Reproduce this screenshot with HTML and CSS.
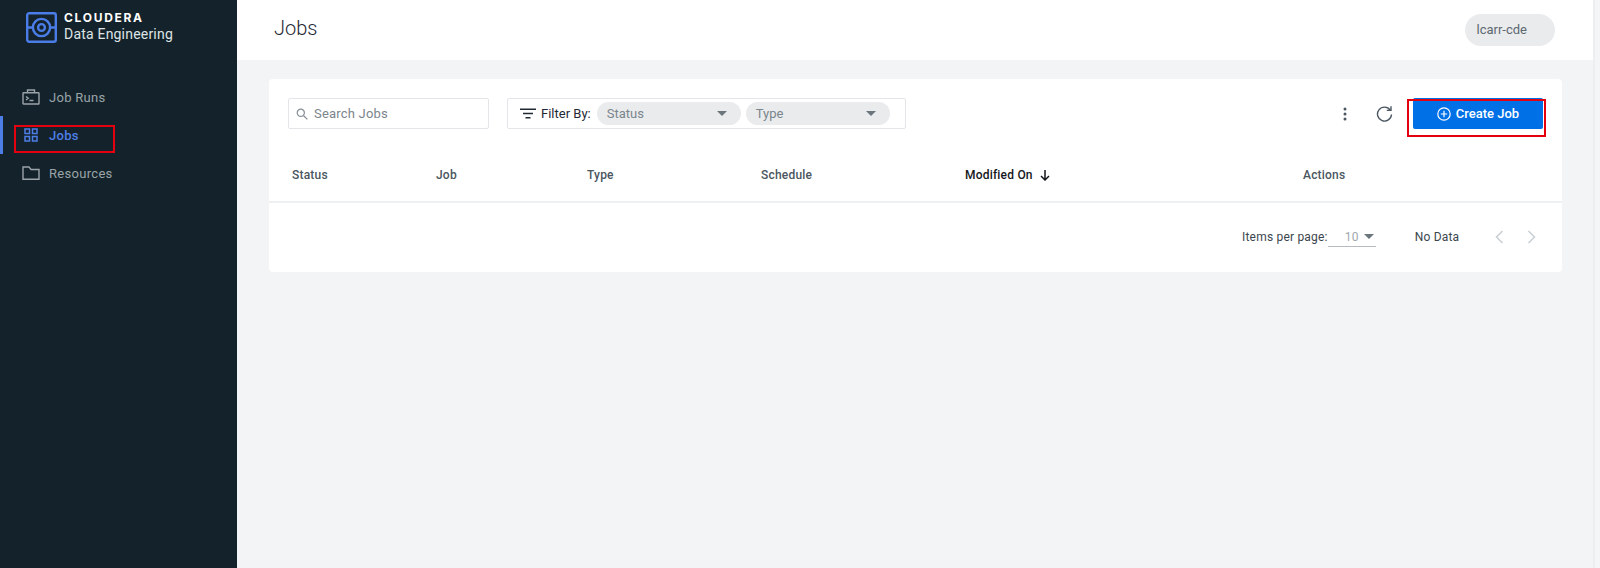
FILE: index.html
```html
<!DOCTYPE html>
<html lang="en">
<head>
    <meta charset="UTF-8">
    <meta name="viewport" content="width=device-width, initial-scale=1.0">
    <title>Jobs</title>
    <link rel="stylesheet" href="styles.css">
</head>
<body>
    <div class="app">
        <aside class="sidebar">
            <div class="brand">
                <svg class="brand-icon" width="31" height="31" viewBox="0 0 31 31" fill="none" stroke="#4a7de8" stroke-width="2.4">
                    <rect x="1.2" y="1.2" width="28.6" height="28.6" rx="2"/>
                    <circle cx="15.5" cy="15.5" r="8.6"/>
                    <circle cx="15.5" cy="15.5" r="3.4"/>
                    <path d="M1.2 15.5H7M24 15.5h5.8"/>
                </svg>
                <div class="brand-text">
                    <div class="brand-name">CLOUDERA</div>
                    <div class="brand-sub">Data Engineering</div>
                </div>
            </div>
            <nav class="nav">
                <a class="nav-item">
                    <svg width="18" height="16" viewBox="0 0 18 16" fill="none" stroke="currentColor" stroke-width="1.4">
                        <rect x="1" y="3.7" width="16" height="11.3" rx="0.5"/>
                        <path d="M5.5 3.7V1h7v2.7M4 7.5l2.2 1.8L4 11M7.5 11.5h4"/>
                    </svg>
                    <span>Job Runs</span>
                </a>
                <a class="nav-item active">
                    <svg width="18" height="14" viewBox="0 0 18 14" fill="none" stroke="currentColor" stroke-width="1.5">
                        <rect x="3" y="1" width="4.5" height="4.5"/>
                        <rect x="10.5" y="1" width="4.5" height="4.5"/>
                        <rect x="3" y="8.5" width="4.5" height="4.5"/>
                        <rect x="10.5" y="8.5" width="4.5" height="4.5"/>
                    </svg>
                    <span>Jobs</span>
                </a>
                <a class="nav-item">
                    <svg width="18" height="14" viewBox="0 0 18 14" fill="none" stroke="currentColor" stroke-width="1.4">
                        <path d="M1 13.2V1h6l2 2.5h8v9.7z"/>
                    </svg>
                    <span>Resources</span>
                </a>
            </nav>
            <div class="mark mark-jobs"></div>
        </aside>

        <main class="main">
            <header class="topbar">
                <h1>Jobs</h1>
                <div class="user-pill">lcarr-cde</div>
            </header>
            <section class="content">
                <div class="card">
                    <div class="toolbar">
                        <div class="search">
                            <svg width="12" height="12" viewBox="0 0 12 12" fill="none" stroke="#868e96" stroke-width="1.2">
                                <circle cx="4.8" cy="4.8" r="3.6"/>
                                <path d="M7.5 7.5l3.8 3.8"/>
                            </svg>
                            <span>Search Jobs</span>
                        </div>
                        <div class="filter">
                            <svg width="16" height="11" viewBox="0 0 16 11" fill="none" stroke="#1f2933" stroke-width="1.5">
                                <path d="M0 1.2h16M3 5.5h10M5.5 9.8h5"/>
                            </svg>
                            <span class="filter-label">Filter By:</span>
                            <div class="chip"><span>Status</span><i class="caret"></i></div>
                            <div class="chip"><span>Type</span><i class="caret"></i></div>
                        </div>
                        <div class="tools">
                            <svg class="kebab" width="4" height="14" viewBox="0 0 4 14" fill="#4a5660">
                                <circle cx="2" cy="2" r="1.5"/>
                                <circle cx="2" cy="7" r="1.5"/>
                                <circle cx="2" cy="12" r="1.5"/>
                            </svg>
                            <svg class="refresh" width="17" height="17" viewBox="0 0 17 17" fill="none" stroke="#4a5660" stroke-width="1.4">
                                <path d="M14.2 5A7 7 0 1 0 15.5 9.5"/>
                                <path d="M15 1.2V5.4H10.8"/>
                            </svg>
                            <button class="create-btn">
                                <svg width="14" height="14" viewBox="0 0 14 14" fill="none" stroke="#fff" stroke-width="1.2">
                                    <circle cx="7" cy="7" r="6.2"/>
                                    <path d="M7 3.8v6.4M3.8 7h6.4"/>
                                </svg>
                                <span>Create Job</span>
                            </button>
                            <div class="mark mark-create"></div>
                        </div>
                    </div>
                    <div class="table-head">
                        <div class="col col-status">Status</div>
                        <div class="col col-job">Job</div>
                        <div class="col col-type">Type</div>
                        <div class="col col-schedule">Schedule</div>
                        <div class="col col-modified">Modified On
                            <svg width="12" height="12" viewBox="0 0 12 12" fill="none" stroke="#14181c" stroke-width="1.5">
                                <path d="M6 1v10M2 7l4 4 4-4"/>
                            </svg>
                        </div>
                        <div class="col col-actions">Actions</div>
                    </div>
                    <div class="pager">
                        <span>Items per page:</span>
                        <div class="page-size"><span>10</span><i class="caret"></i></div>
                        <span class="range">No Data</span>
                        <svg class="arrow" width="9" height="14" viewBox="0 0 9 14" fill="none" stroke="#c9ced3" stroke-width="1.5">
                            <path d="M7.5 1L1.5 7l6 6"/>
                        </svg>
                        <svg class="arrow" width="9" height="14" viewBox="0 0 9 14" fill="none" stroke="#c9ced3" stroke-width="1.5">
                            <path d="M1.5 1l6 6-6 6"/>
                        </svg>
                    </div>
                </div>
            </section>
        </main>
        <div class="scroll-track"></div>
    </div>
</body>
</html>
```

FILE: styles.css
```css
* {
    box-sizing: border-box;
}

body {
    margin: 0;
    font-family: Roboto, "Liberation Sans", sans-serif;
    font-size: 13px;
    color: #1f2933;
    overflow: hidden;
}

.app {
    display: flex;
    height: 568px;
}

.sidebar {
    position: relative;
    width: 237px;
    flex-shrink: 0;
    background-color: #14232b;
}

.brand {
    display: flex;
    align-items: center;
    gap: 7px;
    padding: 11px 0 0 26px;
}

.brand-icon {
    flex-shrink: 0;
}

.brand-text {
    margin-top: -1px;
}

.brand-name {
    font-family: Inter, sans-serif;
    font-size: 12px;
    font-weight: 700;
    letter-spacing: 1.7px;
    line-height: 15px;
    color: #fff;
}

.brand-sub {
    font-size: 14px;
    letter-spacing: 0.2px;
    line-height: 18px;
    color: #dfe3e6;
}

.nav {
    margin-top: 35px;
}

.nav-item {
    display: flex;
    align-items: center;
    gap: 9px;
    height: 38px;
    padding-left: 22px;
    color: #9aa3a8;
    font-size: 13px;
    letter-spacing: 0.3px;
}

.nav-item.active {
    color: #4d7ee8;
    font-weight: 500;
    box-shadow: inset 3px 0 0 #4d7ee8;
}

.mark {
    position: absolute;
    border: 2px solid #e3000f;
}

.mark-jobs {
    left: 14px;
    top: 125px;
    width: 101px;
    height: 28px;
}

.main {
    flex: 1;
    display: flex;
    flex-direction: column;
    background-color: #f3f4f6;
}

.scroll-track {
    width: 7px;
    flex-shrink: 0;
    background-color: #f4f5f6;
    border-left: 2px solid #eceef0;
}

.topbar {
    display: flex;
    align-items: center;
    justify-content: space-between;
    height: 60px;
    padding: 0 38px 5px 37px;
    background-color: white;
}

.topbar h1 {
    margin: 0;
    font-size: 20px;
    font-weight: 300;
    color: #1f2933;
}

.user-pill {
    width: 90px;
    height: 32px;
    margin-top: 4px;
    padding-left: 11.5px;
    border-radius: 16px;
    background-color: #e9ebed;
    color: #5d6870;
    font-size: 13px;
    line-height: 32px;
}

.content {
    padding: 19px 31px 0 32px;
}

.card {
    height: 193px;
    background-color: white;
    border-radius: 4px;
}

.toolbar {
    display: flex;
    align-items: center;
    padding: 19px 19px 0 19px;
}

.search {
    display: flex;
    align-items: center;
    gap: 6px;
    width: 201px;
    height: 31px;
    padding-left: 7px;
    border: 1px solid #e3e5e8;
    border-radius: 2px;
    color: #7b858c;
    font-size: 13px;
    letter-spacing: 0.2px;
}

.filter {
    display: flex;
    align-items: center;
    width: 399px;
    height: 31px;
    margin-left: 18px;
    padding-left: 12px;
    border: 1px solid #e3e5e8;
    border-radius: 2px;
}

.filter-label {
    margin: 0 6px 0 5px;
    font-size: 13px;
}

.chip {
    display: flex;
    align-items: center;
    justify-content: space-between;
    width: 144px;
    height: 23px;
    margin-right: 5px;
    padding: 0 14px 0 10px;
    border-radius: 12px;
    background-color: #e9ebed;
    color: #7b858c;
    font-size: 13px;
}

.caret {
    width: 0;
    height: 0;
    border-left: 5px solid transparent;
    border-right: 5px solid transparent;
    border-top: 5px solid #6b757c;
}

.tools {
    position: relative;
    display: flex;
    align-items: center;
    margin-left: auto;
}

.kebab {
    margin-right: 29px;
}

.refresh {
    margin-right: 20px;
}

.create-btn {
    display: flex;
    align-items: center;
    justify-content: center;
    gap: 5px;
    width: 130px;
    height: 31px;
    border: none;
    border-radius: 2px;
    background-color: #0070e6;
    color: white;
    font-family: inherit;
    font-size: 13px;
    font-weight: 500;
}

.mark-create {
    right: -3px;
    top: 1px;
    width: 139px;
    height: 38px;
}

.table-head {
    display: flex;
    align-items: center;
    height: 55px;
    margin-top: 19px;
    border-bottom: 2px solid #eff0f2;
    color: #4a5660;
    font-size: 12px;
    font-weight: 500;
    letter-spacing: 0.2px;
    padding: 1px 0 0 23px;
}

.col-status {
    width: 144px;
}

.col-job {
    width: 151px;
}

.col-type {
    width: 174px;
}

.col-schedule {
    width: 204px;
}

.col-modified {
    display: flex;
    align-items: center;
    gap: 6px;
    width: 338px;
    color: #14181c;
}

.pager {
    display: flex;
    align-items: center;
    height: 68px;
    padding-left: 973px;
    font-size: 12px;
    letter-spacing: 0.2px;
    color: #3c464e;
}

.page-size {
    display: flex;
    align-items: center;
    justify-content: flex-end;
    gap: 5px;
    width: 48px;
    height: 19px;
    padding-right: 2px;
    border-bottom: 1px solid #b5bbc0;
    color: #a0a7ad;
    font-size: 12px;
}

.range {
    margin-left: 39px;
    margin-right: 36px;
}

.arrow {
    margin-right: 23px;
}
```
